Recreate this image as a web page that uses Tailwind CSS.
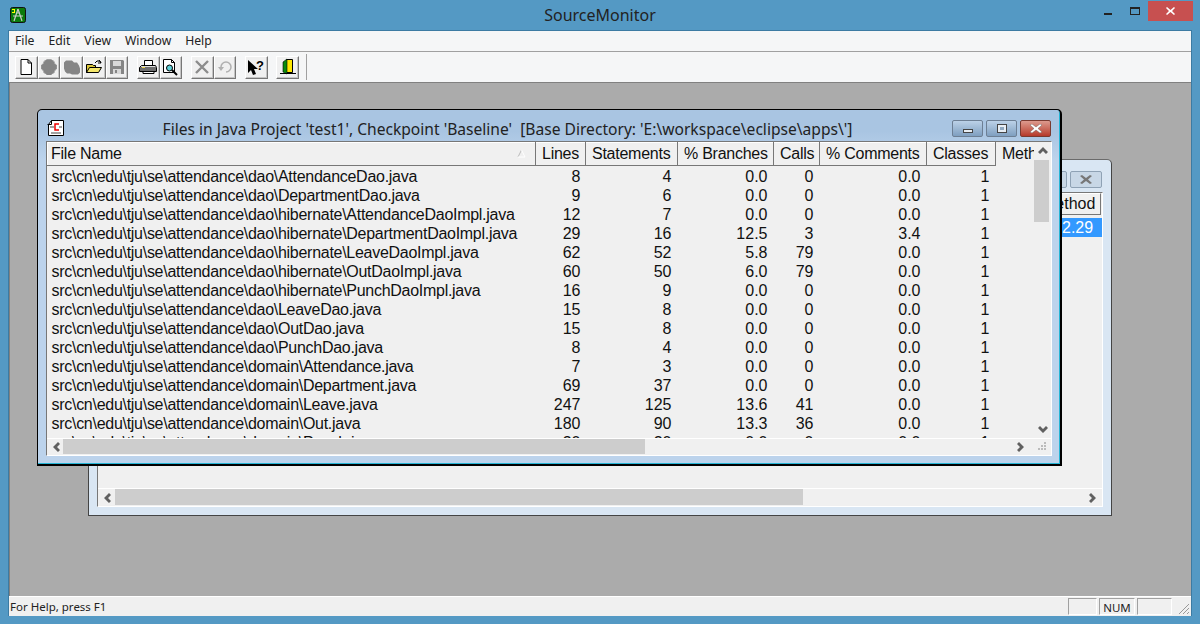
<!DOCTYPE html>
<html lang="en">
<head>
<meta charset="utf-8">
<title>SourceMonitor</title>
<script src="https://cdn.jsdelivr.net/npm/@tailwindcss/browser@4"></script>
</head>
<body class="w-[1200px] h-[624px] overflow-hidden bg-[#5499c4] font-['Liberation_Sans',Arial,sans-serif] text-[#111]">
<div class="flex flex-col h-[624px] px-[8px] pb-[8px]">
  <!-- title bar -->
  <div class="h-[30px] flex items-center relative shrink-0">
    <svg class="absolute left-[2px] top-[7px]" width="16" height="16" viewBox="0 0 16 16"><rect x=".5" y=".5" width="15" height="15" rx="2" fill="#0b7a0b" stroke="#111"/><path d="M8 2L4 14M8 2l4 12M3 9h10M6 6h4" stroke="#ccc" stroke-width="1.200" fill="none"/><path d="M2 2h3v1H2zM2 5h3v1H2zM4 3h1v2H4z" fill="#ff0"/></svg>
    <div class="flex-1 text-center text-[16px] font-['Noto_Sans','Open_Sans',sans-serif] text-[#222]">SourceMonitor</div>
    <div class="absolute right-0 top-[1px] flex items-start">
      <div class="w-[26px] h-[20px] flex items-center justify-center mt-[1px]"><div class="w-[8px] h-[2px] bg-[#222] mt-[4px]"></div></div>
      <div class="w-[27px] h-[20px] flex items-center justify-center mt-[1px]"><div class="w-[10px] h-[8px] border border-[#222] border-t-2 mt-[-2px]"></div></div>
      <div class="w-[45px] h-[20px] bg-[#c75050] flex items-center justify-center mr-[-1px]">
        <svg width="9" height="8" viewBox="0 0 9 8"><path d="M1 0l3.500 3L8 0l1 1-3 3 3 3-1 1-3.500-3L1 8 0 7l3-3-3-3z" fill="#fff"/></svg>
      </div>
    </div>
  </div>
  <div class="flex-1 flex flex-col bg-[#f0f0f0] border border-[#3c7ba3] border-b-0 min-h-0">
    <!-- menu -->
    <div class="h-[20px] shrink-0 flex items-center gap-[14px] pl-[6px] text-[12.200px] bg-[#f5f6f7] font-['Noto_Sans',sans-serif] text-[#222]">
      <span>File</span><span>Edit</span><span>View</span><span>Window</span><span>Help</span>
    </div>
    <!-- toolbar -->
    <div class="h-[31px] shrink-0 flex items-center bg-[#f5f6f7] border-t border-[#a0a0a0] pl-[6px]">
      <div class="flex items-center gap-[8.500px] h-[26px] pr-[7px] border-r border-[#a0a0a0]">
        <div class="flex">
          <div class="w-[22.700px] h-[23px] bg-[#f0f0f0] border border-white border-r-[#777] border-b-[#777] shadow-[inset_-1px_-1px_0_#c4c4c4] flex items-center justify-center">
            <svg width="16" height="16" viewBox="0 0 16 16"><path d="M3 .5h7l3.500 3.500v11.500H3z" fill="#fff" stroke="#000"/><path d="M10 .5V4h3.500" fill="none" stroke="#000"/></svg>
          </div>
          <div class="w-[22.700px] h-[23px] bg-[#f0f0f0] border border-white border-r-[#777] border-b-[#777] shadow-[inset_-1px_-1px_0_#c4c4c4] flex items-center justify-center">
            <svg width="18" height="18" viewBox="0 0 16 16"><path d="M6 1h4l1 1h1v1h1v2h1v1h1v4h-1v1h-1v2h-1v1h-1l-1 1H6l-1-1H4v-1H3v-2H2v-1H1V6h1V5h1V3h1V2h1z" fill="#858585"/></svg>
          </div>
          <div class="w-[22.700px] h-[23px] bg-[#f0f0f0] border border-white border-r-[#777] border-b-[#777] shadow-[inset_-1px_-1px_0_#c4c4c4] flex items-center justify-center">
            <svg width="18" height="17" viewBox="0 0 18 16"><path d="M3 1h6l2 2h3l2 3 1 3v4l-2 2H9l-2-1H4l-2-2-1-3V3z" fill="#858585"/></svg>
          </div>
          <div class="w-[22.700px] h-[23px] bg-[#f0f0f0] border border-white border-r-[#777] border-b-[#777] shadow-[inset_-1px_-1px_0_#c4c4c4] flex items-center justify-center">
            <svg width="18" height="16" viewBox="0 0 18 16"><path d="M1.500 5.500h6l1 1h2v7h-9z" fill="#d9c53a" stroke="#000"/><path d="M1.500 13.500l3-5h12l-3 5z" fill="#f5e76a" stroke="#000"/><path d="M10 4l2-2 3 0 1 2M14 1l2 3-3 0" fill="none" stroke="#000"/></svg>
          </div>
          <div class="w-[22.700px] h-[23px] bg-[#f0f0f0] border border-white border-r-[#777] border-b-[#777] shadow-[inset_-1px_-1px_0_#c4c4c4] flex items-center justify-center">
            <svg width="16" height="16" viewBox="0 0 16 16"><path d="M1 1h13l1 1v13H1z" fill="#858585"/><path d="M4 2h8v5H4z" fill="#d8d8d8"/><path d="M4 10h8v5H4z" fill="#d8d8d8"/><path d="M6 11h2v3H6z" fill="#858585"/></svg>
          </div>
        </div>
        <div class="flex">
          <div class="w-[22.700px] h-[23px] bg-[#f0f0f0] border border-white border-r-[#777] border-b-[#777] shadow-[inset_-1px_-1px_0_#c4c4c4] flex items-center justify-center">
            <svg width="18" height="16" viewBox="0 0 18 16"><path d="M5.500 1.500h8v5h-8z" fill="#fff" stroke="#000"/><path d="M2.500 6.500h14l1 2v4h-17v-4z" fill="#ddd" stroke="#000"/><path d="M1 9h16M1 11h16" stroke="#000"/><path d="M4 12.500h11v2H4z" fill="#fff" stroke="#000"/><path d="M3 8h3v1H3z" fill="#e8d44a"/></svg>
          </div>
          <div class="w-[22.700px] h-[23px] bg-[#f0f0f0] border border-white border-r-[#777] border-b-[#777] shadow-[inset_-1px_-1px_0_#c4c4c4] flex items-center justify-center">
            <svg width="15" height="17" viewBox="0 0 15 17"><path d="M.5.500h8l3 3v10H.5z" fill="#fff" stroke="#000"/><path d="M8.500.500v3h3" fill="none" stroke="#000"/><circle cx="6.500" cy="9" r="3" fill="#5fd0d8" stroke="#000"/><path d="M9 11l5 5" stroke="#000" stroke-width="2"/></svg>
          </div>
        </div>
        <div class="flex">
          <div class="w-[22.700px] h-[23px] bg-[#f0f0f0] border border-white border-r-[#777] border-b-[#777] shadow-[inset_-1px_-1px_0_#c4c4c4] flex items-center justify-center">
            <svg width="14" height="14" viewBox="0 0 14 14"><path d="M1 1l12 12M13 1L1 13" stroke="#8c8c8c" stroke-width="2.400"/></svg>
          </div>
          <div class="w-[22.700px] h-[23px] bg-[#f0f0f0] border border-white border-r-[#777] border-b-[#777] shadow-[inset_-1px_-1px_0_#c4c4c4] flex items-center justify-center">
            <svg width="16" height="16" viewBox="0 0 16 16"><path d="M4 8a5 5 0 1 1 5 5" fill="none" stroke="#b0b0b0" stroke-width="1.500"/><path d="M1 8h6L4 12z" fill="#b0b0b0"/></svg>
          </div>
        </div>
        <div class="w-[23px] h-[23px] bg-[#f0f0f0] border border-white border-r-[#777] border-b-[#777] shadow-[inset_-1px_-1px_0_#c4c4c4] flex items-center justify-center">
          <svg width="18" height="17" viewBox="0 0 18 17"><path d="M1 1v13l3-3 2 5 3-1-2-5h4z" fill="#000"/><text x="9" y="11" font-size="13" font-weight="700" font-family="Liberation Sans" fill="#000">?</text></svg>
        </div>
        <div class="w-[23px] h-[23px] bg-[#f0f0f0] border border-white border-r-[#777] border-b-[#777] shadow-[inset_-1px_-1px_0_#c4c4c4] flex items-center justify-center">
          <svg width="18" height="18" viewBox="0 0 18 18"><path d="M7.500 1.500h6v13h-6z" fill="#ffe800" stroke="#000"/><path d="M4 4l4-3v15l-4-2z" fill="#0a8a0a" stroke="#000" stroke-width=".6"/><path d="M1 15.500h16" stroke="#000"/></svg>
        </div>
      </div>
    </div>
    <!-- mdi area -->
    <div class="relative flex-1 bg-[#ababab] border-t border-[#808080] border-l border-l-[#808080] min-h-0 overflow-hidden">

      <!-- back window -->
      <div class="absolute left-[78px] top-[76px] w-[1024px] h-[357px] bg-[#d9e6f3] border border-[#444] border-t-[#6b6b6b] rounded-t-[5px] p-[8px] pt-[32px]">
        <div class="absolute right-[44px] top-[11px] w-[32px] h-[17px] border border-[#8fa2b5] rounded-[2px] bg-[#c8d7e6]"></div>
        <div class="absolute right-[9px] top-[11px] w-[32px] h-[17px] border border-[#8fa2b5] rounded-[2px] bg-[#c8d7e6] flex items-center justify-center">
          <svg width="12" height="9" viewBox="0 0 12 9"><path d="M2 0l4 3 4-3 2 1-4 3.500L12 8l-2 1-4-3-4 3-2-1 4-3.500L0 1z" fill="#777"/></svg>
        </div>
        <div class="h-full bg-[#f0f0f0] border border-white border-l-[#777] border-t-[#777] relative">
          <div class="absolute right-[1px] top-[0px] w-[60px] h-[22px] bg-[#f0f0f0] border border-white border-r-[#777] border-b-[#777] text-[16px] leading-[20px] text-right pr-[7px] overflow-hidden">Method</div>
          <div class="absolute right-[0px] top-[25px] w-[62px] h-[19px] bg-[#3399ff] text-white text-[16px] leading-[19px] pl-[22px]">2.29</div>
          <div class="absolute left-0 right-0 bottom-0 h-[18px] flex items-center justify-between px-[5px] border-t border-white">
            <svg width="8" height="10" viewBox="0 0 8 10"><path d="M6 0l2 2-3 3 3 3-2 2-5-5z" fill="#606060"/></svg>
            <div class="absolute left-[17px] top-0 w-[688px] h-[16px] bg-[#cdcdcd]"></div>
            <svg width="8" height="10" viewBox="0 0 8 10"><path d="M2 0L0 2l3 3-3 3 2 2 5-5z" fill="#606060"/></svg>
          </div>
        </div>
      </div>

      <!-- front window -->
      <div class="absolute left-[27px] top-[26px] w-[1025px] h-[357px] bg-gradient-to-b from-[#a9c5e2] to-[#bcd3ec] from-[6%] to-[14%] border border-black border-b-2 border-r-2 rounded-t-[5px] px-[8px] pb-[8px] shadow-[inset_-1px_-1px_0_#25b5d5]">
        <div class="h-[31px] relative flex items-center">
          <svg class="absolute left-[1px] top-[10px]" width="18" height="18" viewBox="0 0 18 18"><path d="M4.500 .5h12v15h-15v-11z" fill="#fff" stroke="#000"/><path d="M4.500 .5v4h-4" fill="none" stroke="#000"/><path d="M12 4H8v6h4" fill="none" stroke="#e00" stroke-width="1.500"/><path d="M3 7h4M12 7h3M4 13h10" stroke="#444"/></svg>
          <div class="flex-1 text-center text-[15.600px] font-['Noto_Sans',sans-serif] text-[#222] whitespace-pre pr-[83px] pt-[9px]">Files in Java Project 'test1', Checkpoint 'Baseline'  [Base Directory: 'E:\workspace\eclipse\apps\']</div>
          <div class="absolute right-[1px] top-[10px] flex gap-[3px]">
            <div class="w-[31px] h-[17px] rounded-[2px] border border-[#6d7f94] bg-gradient-to-b from-[#bcd2e8] to-[#7f9fc0] flex items-center justify-center"><div class="w-[10px] h-[4px] mt-[4px] bg-[#e8eef4] border border-[#444]"></div></div>
            <div class="w-[31px] h-[17px] rounded-[2px] border border-[#6d7f94] bg-gradient-to-b from-[#bcd2e8] to-[#7f9fc0] flex items-center justify-center"><div class="w-[10px] h-[9px] bg-[#e8eef4] border border-[#444] flex items-center justify-center"><div class="w-[4px] h-[3px] bg-[#8fa8c0]"></div></div></div>
            <div class="w-[31px] h-[17px] rounded-[2px] border border-[#7a3a30] bg-gradient-to-b from-[#dc9a8e] to-[#b5382a] flex items-center justify-center"><svg width="12" height="9" viewBox="0 0 12 9"><path d="M2 0l4 3 4-3 2 1-4 3.500L12 8l-2 1-4-3-4 3-2-1 4-3.500L0 1z" fill="#fff" stroke="#555" stroke-width=".4"/></svg></div>
          </div>
        </div>
        <div class="bg-[#f0f0f0] h-[315px] border border-white border-l-[#777] border-t-[#777] relative overflow-hidden">
          <table class="table-fixed w-[988px] border-collapse text-[16px] text-right">
            <colgroup>
              <col class="w-[488px]"><col class="w-[50px]"><col class="w-[92px]"><col class="w-[96px]"><col class="w-[46px]"><col class="w-[107px]"><col class="w-[69px]"><col class="w-[40px]">
            </colgroup>
            <thead>
              <tr class="h-[22px] text-left leading-[22px] tracking-[-0.25px]">
                <th class="font-normal pl-[3px] border border-white border-r-[#777] border-b-[#777] relative">File Name<svg class="absolute right-[9px] top-[6px]" width="9" height="9" viewBox="0 0 9 9"><path d="M4.500 1L1 8" stroke="#bbb" fill="none"/><path d="M4.500 1L8 8H1" stroke="#fff" fill="none"/></svg></th>
                <th class="font-normal pl-[6px] border border-white border-r-[#777] border-b-[#777]">Lines</th>
                <th class="font-normal pl-[6px] border border-white border-r-[#777] border-b-[#777]">Statements</th>
                <th class="font-normal pl-[6px] border border-white border-r-[#777] border-b-[#777]">% Branches</th>
                <th class="font-normal pl-[6px] border border-white border-r-[#777] border-b-[#777]">Calls</th>
                <th class="font-normal pl-[6px] border border-white border-r-[#777] border-b-[#777]">% Comments</th>
                <th class="font-normal pl-[6px] border border-white border-r-[#777] border-b-[#777]">Classes</th>
                <th class="font-normal pl-[6px] overflow-hidden whitespace-nowrap">Methods</th>
              </tr>
            </thead>
            <tbody class="[&_td]:pr-[6px] [&_td]:h-[19px] [&_td]:leading-[19px] [&_td:nth-child(2)]:pr-[5px] [&_td:first-child]:text-left [&_td:first-child]:pl-[4px] [&_td:first-child]:tracking-[-0.28px] [&_td:first-child]:whitespace-nowrap">
              <tr class="h-[1px]"><td colspan="8" class="!h-[1px] !leading-[1px]"></td></tr>
              <tr><td>src\cn\edu\tju\se\attendance\dao\AttendanceDao.java</td><td>8</td><td>4</td><td>0.0</td><td>0</td><td>0.0</td><td>1</td><td></td></tr>
              <tr><td>src\cn\edu\tju\se\attendance\dao\DepartmentDao.java</td><td>9</td><td>6</td><td>0.0</td><td>0</td><td>0.0</td><td>1</td><td></td></tr>
              <tr><td>src\cn\edu\tju\se\attendance\dao\hibernate\AttendanceDaoImpl.java</td><td>12</td><td>7</td><td>0.0</td><td>0</td><td>0.0</td><td>1</td><td></td></tr>
              <tr><td>src\cn\edu\tju\se\attendance\dao\hibernate\DepartmentDaoImpl.java</td><td>29</td><td>16</td><td>12.5</td><td>3</td><td>3.4</td><td>1</td><td></td></tr>
              <tr><td>src\cn\edu\tju\se\attendance\dao\hibernate\LeaveDaoImpl.java</td><td>62</td><td>52</td><td>5.8</td><td>79</td><td>0.0</td><td>1</td><td></td></tr>
              <tr><td>src\cn\edu\tju\se\attendance\dao\hibernate\OutDaoImpl.java</td><td>60</td><td>50</td><td>6.0</td><td>79</td><td>0.0</td><td>1</td><td></td></tr>
              <tr><td>src\cn\edu\tju\se\attendance\dao\hibernate\PunchDaoImpl.java</td><td>16</td><td>9</td><td>0.0</td><td>0</td><td>0.0</td><td>1</td><td></td></tr>
              <tr><td>src\cn\edu\tju\se\attendance\dao\LeaveDao.java</td><td>15</td><td>8</td><td>0.0</td><td>0</td><td>0.0</td><td>1</td><td></td></tr>
              <tr><td>src\cn\edu\tju\se\attendance\dao\OutDao.java</td><td>15</td><td>8</td><td>0.0</td><td>0</td><td>0.0</td><td>1</td><td></td></tr>
              <tr><td>src\cn\edu\tju\se\attendance\dao\PunchDao.java</td><td>8</td><td>4</td><td>0.0</td><td>0</td><td>0.0</td><td>1</td><td></td></tr>
              <tr><td>src\cn\edu\tju\se\attendance\domain\Attendance.java</td><td>7</td><td>3</td><td>0.0</td><td>0</td><td>0.0</td><td>1</td><td></td></tr>
              <tr><td>src\cn\edu\tju\se\attendance\domain\Department.java</td><td>69</td><td>37</td><td>0.0</td><td>0</td><td>0.0</td><td>1</td><td></td></tr>
              <tr><td>src\cn\edu\tju\se\attendance\domain\Leave.java</td><td>247</td><td>125</td><td>13.6</td><td>41</td><td>0.0</td><td>1</td><td></td></tr>
              <tr><td>src\cn\edu\tju\se\attendance\domain\Out.java</td><td>180</td><td>90</td><td>13.3</td><td>36</td><td>0.0</td><td>1</td><td></td></tr>
              <tr><td>src\cn\edu\tju\se\attendance\domain\Punch.java</td><td>30</td><td>20</td><td>0.0</td><td>0</td><td>0.0</td><td>1</td><td></td></tr>
            </tbody>
          </table>
          <!-- vertical scrollbar -->
          <div class="absolute right-0 top-0 w-[17px] h-[296px] bg-[#f0f0f0] flex flex-col items-center justify-between py-[4px]">
            <svg width="10" height="8" viewBox="0 0 10 8"><path d="M5 1l5 5-2 2-3-3-3 3-2-2z" fill="#606060"/></svg>
            <div class="absolute left-0 top-[18px] w-[15px] h-[62px] bg-[#cdcdcd]"></div>
            <svg width="10" height="8" viewBox="0 0 10 8"><path d="M5 7L0 2l2-2 3 3 3-3 2 2z" fill="#606060"/></svg>
          </div>
          <!-- horizontal scrollbar -->
          <div class="absolute left-0 right-0 bottom-0 h-[17px] bg-[#f0f0f0] border-t border-white flex items-center justify-between px-[5px]">
            <svg width="8" height="10" viewBox="0 0 8 10"><path d="M6 0l2 2-3 3 3 3-2 2-5-5z" fill="#606060"/></svg>
            <div class="absolute left-[16px] top-0 w-[582px] h-[15px] bg-[#cdcdcd]"></div>
            <div class="flex items-center gap-[11px]">
              <svg width="8" height="10" viewBox="0 0 8 10"><path d="M2 0L0 2l3 3-3 3 2 2 5-5z" fill="#606060"/></svg>
              <svg width="10" height="10" viewBox="0 0 10 10"><path d="M8 0h2v2H8zM5 3h2v2H5zM8 3h2v2H8zM2 6h2v2H2zM5 6h2v2H5zM8 6h2v2H8z" fill="#bbb"/></svg>
            </div>
          </div>
        </div>
      </div>
    </div>
    <!-- status bar -->
    <div class="h-[20px] shrink-0 flex items-center bg-[#f0f0f0] border-t border-white text-[11.500px] font-['Noto_Sans',sans-serif] text-[#222] pl-[1px] relative">
      <span class="flex-1">For Help, press F1</span>
      <div class="w-[29px] h-[17px] border border-white border-l-[#a0a0a0] border-t-[#a0a0a0] mr-[2px]"></div>
      <div class="w-[36px] h-[17px] border border-white border-l-[#a0a0a0] border-t-[#a0a0a0] mr-[2px] leading-[17px] text-center">NUM</div>
      <div class="w-[35px] h-[17px] border border-white border-l-[#a0a0a0] border-t-[#a0a0a0] mr-[19px]"></div>
      <svg class="absolute right-[1px] bottom-[1px]" width="12" height="12" viewBox="0 0 12 12"><path d="M11 1L1 11M11 5l-6 6M11 9l-2 2" stroke="#999" fill="none"/></svg>
    </div>
  </div>
</div>
</body>
</html>
